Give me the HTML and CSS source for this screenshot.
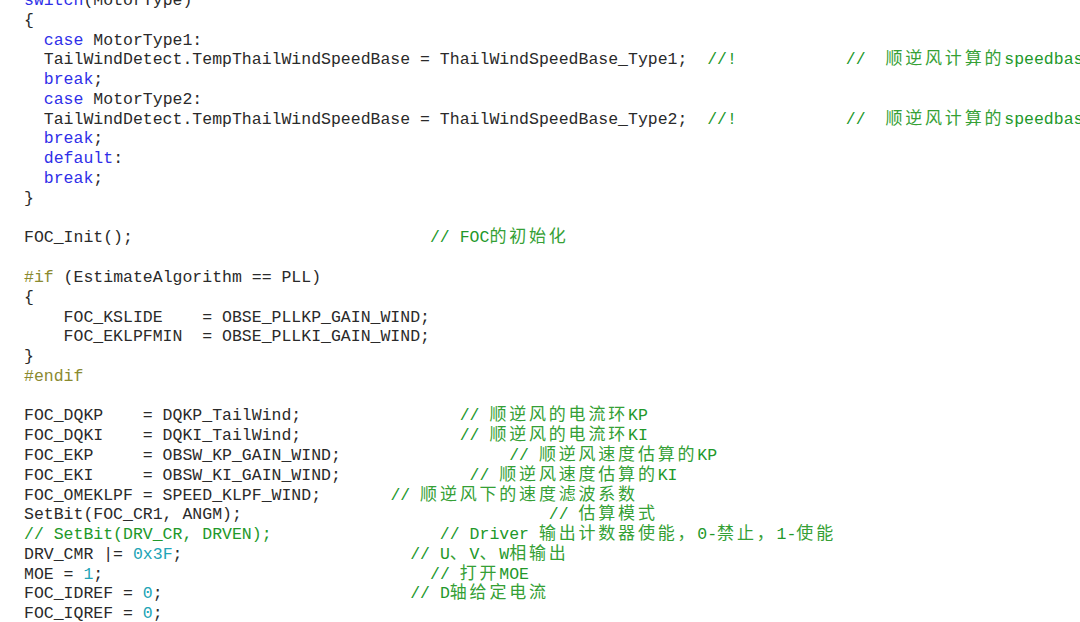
FILE: index.html
```html
<!DOCTYPE html>
<html lang="zh-CN">
<head>
<meta charset="utf-8">
<title>TailWind code</title>
<link rel="stylesheet" href="styles.css">
</head>
<body>
<main class="editor">
<div class="code">
<div class="ln"><span class="kw">switch</span>(MotorType)</div>
<div class="ln">{</div>
<div class="ln">  <span class="kw">case</span> MotorType1:</div>
<div class="ln">  TailWindDetect.TempThailWindSpeedBase = ThailWindSpeedBase_Type1;  <span class="cm">//!           //  <span class="cjk">顺逆风计算的</span>speedbase</span></div>
<div class="ln">  <span class="kw">break</span>;</div>
<div class="ln">  <span class="kw">case</span> MotorType2:</div>
<div class="ln">  TailWindDetect.TempThailWindSpeedBase = ThailWindSpeedBase_Type2;  <span class="cm">//!           //  <span class="cjk">顺逆风计算的</span>speedbase</span></div>
<div class="ln">  <span class="kw">break</span>;</div>
<div class="ln">  <span class="kw">default</span>:</div>
<div class="ln">  <span class="kw">break</span>;</div>
<div class="ln">}</div>
<div class="ln"></div>
<div class="ln">FOC_Init();                              <span class="cm">// FOC<span class="cjk">的初始化</span></span></div>
<div class="ln"></div>
<div class="ln"><span class="pp">#if</span> (EstimateAlgorithm == PLL)</div>
<div class="ln">{</div>
<div class="ln">    FOC_KSLIDE    = OBSE_PLLKP_GAIN_WIND;</div>
<div class="ln">    FOC_EKLPFMIN  = OBSE_PLLKI_GAIN_WIND;</div>
<div class="ln">}</div>
<div class="ln"><span class="pp">#endif</span></div>
<div class="ln"></div>
<div class="ln">FOC_DQKP    = DQKP_TailWind;                <span class="cm">// <span class="cjk">顺逆风的电流环</span>KP</span></div>
<div class="ln">FOC_DQKI    = DQKI_TailWind;                <span class="cm">// <span class="cjk">顺逆风的电流环</span>KI</span></div>
<div class="ln">FOC_EKP     = OBSW_KP_GAIN_WIND;                 <span class="cm">// <span class="cjk">顺逆风速度估算的</span>KP</span></div>
<div class="ln">FOC_EKI     = OBSW_KI_GAIN_WIND;             <span class="cm">// <span class="cjk">顺逆风速度估算的</span>KI</span></div>
<div class="ln">FOC_OMEKLPF = SPEED_KLPF_WIND;       <span class="cm">// <span class="cjk">顺逆风下的速度滤波系数</span></span></div>
<div class="ln">SetBit(FOC_CR1, ANGM);                               <span class="cm">// <span class="cjk">估算模式</span></span></div>
<div class="ln"><span class="cm">// SetBit(DRV_CR, DRVEN);                 // Driver <span class="cjk">输出计数器使能，</span>0-<span class="cjk">禁止，</span>1-<span class="cjk">使能</span></span></div>
<div class="ln">DRV_CMR |= <span class="nm">0x3F</span>;                       <span class="cm">// U<span class="cjk">、</span>V<span class="cjk">、</span>W<span class="cjk">相输出</span></span></div>
<div class="ln">MOE = <span class="nm">1</span>;                                 <span class="cm">// <span class="cjk">打开</span>MOE</span></div>
<div class="ln">FOC_IDREF = <span class="nm">0</span>;                         <span class="cm">// D<span class="cjk">轴给定电流</span></span></div>
<div class="ln">FOC_IQREF = <span class="nm">0</span>;</div>
</div>
</main>
</body>
</html>
```

FILE: styles.css
```css
html, body {
  margin: 0;
  padding: 0;
  background: #ffffff;
}

body {
  width: 1080px;
  height: 622px;
  overflow: hidden;
}

.editor {
  width: 1080px;
  height: 622px;
  overflow: hidden;
  background: #ffffff;
}

.code {
  margin-top: -9px;
  padding-left: 24px;
  font-family: "Nimbus Mono PS", "Liberation Mono", "Courier New", monospace;
  font-size: 16.5px;
  line-height: 19.79px;
  color: #2a2a2a;
}

.ln {
  height: 19.79px;
  white-space: pre;
}

.kw {
  color: #2f2fe8;
}

.cm {
  color: #22982a;
}

.pp {
  color: #8a8a30;
}

.nm {
  color: #22a4b6;
}

.cjk {
  font-family: "Noto Sans CJK SC", "Noto Sans CJK JP", sans-serif;
  font-size: 17px;
  letter-spacing: 2.8px;
  line-height: 0;
  color: #35a035;
}
```
